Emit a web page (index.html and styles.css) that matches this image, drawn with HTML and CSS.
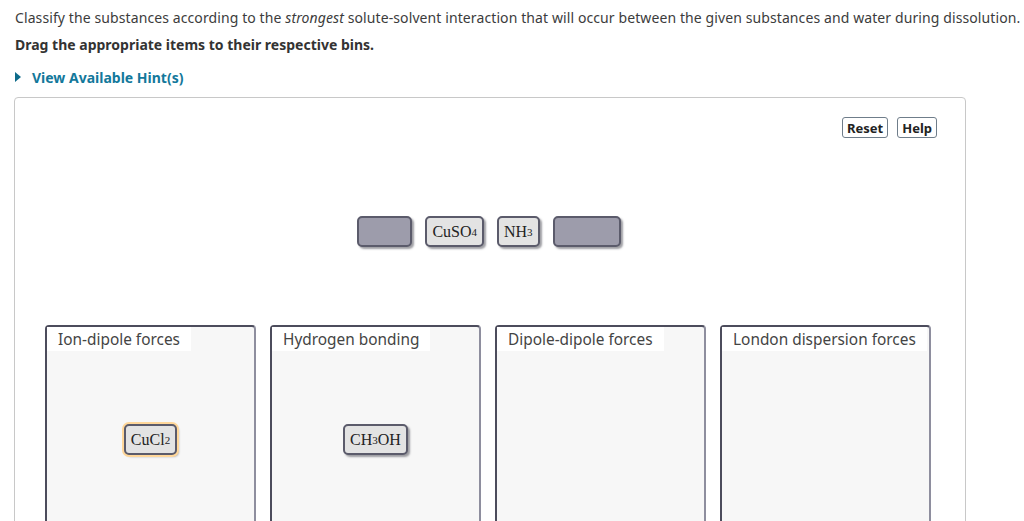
FILE: index.html
```html
<!DOCTYPE html>
<html>
<head>
<meta charset="utf-8">
<link rel="stylesheet" href="styles.css">
</head>
<body>
<p class="prompt">Classify the substances according to the <em>strongest</em> solute-solvent interaction that will occur between the given substances and water during dissolution.</p>
<p class="instr">Drag the appropriate items to their respective bins.</p>
<div class="hint"><span class="tri"></span><span class="hint-text">View Available Hint(s)</span></div>
<div class="board">
  <div class="tools">
    <button class="btn">Reset</button>
    <button class="btn">Help</button>
  </div>
  <div class="pool">
    <div class="token empty wide1"></div>
    <div class="token">CuSO<sub>4</sub></div>
    <div class="token">NH<sub>3</sub></div>
    <div class="token empty wide2"></div>
  </div>
  <div class="bins">
    <div class="bin">
      <div class="bin-label">Ion-dipole forces</div>
      <div class="bin-items"><div class="token selected">CuCl<sub>2</sub></div></div>
    </div>
    <div class="bin">
      <div class="bin-label">Hydrogen bonding</div>
      <div class="bin-items"><div class="token">CH<sub>3</sub>OH</div></div>
    </div>
    <div class="bin">
      <div class="bin-label">Dipole-dipole forces</div>
      <div class="bin-items"></div>
    </div>
    <div class="bin">
      <div class="bin-label">London dispersion forces</div>
      <div class="bin-items"></div>
    </div>
  </div>
</div>
</body>
</html>
```
FILE: styles.css
```css
html { overflow: hidden; }
body {
  margin: 0;
  padding: 8px 0 0 15px;
  font-family: "Noto Sans", "Open Sans", sans-serif;
  color: #333;
  background: #fff;
}
.prompt {
  margin: 0;
  font-size: 14px;
  letter-spacing: 0.1px;
  line-height: 20px;
  color: #3c3c3c;
  white-space: nowrap;
}
.instr {
  margin: 7px 0 0 0;
  font-size: 14px;
  line-height: 20px;
  font-weight: bold;
  color: #333;
}
.hint {
  margin-top: 12px;
  display: flex;
  align-items: center;
  height: 20px;
}
.tri {
  width: 0;
  height: 0;
  border-top: 5.5px solid transparent;
  border-bottom: 5.5px solid transparent;
  border-left: 6px solid #0e6b8a;
  margin-right: 11px;
}
.hint-text {
  font-size: 14px;
  font-weight: bold;
  color: #13789b;
}
.board {
  margin-top: 10px;
  margin-left: -1px;
  width: 950px;
  height: 500px;
  border: 1px solid #c8c8c8;
  border-radius: 4px;
  box-sizing: content-box;
}
.tools {
  display: flex;
  justify-content: flex-end;
  gap: 9px;
  padding: 19px 28px 0 0;
}
.btn {
  font-family: "Noto Sans", "Open Sans", sans-serif;
  font-size: 13px;
  font-weight: bold;
  color: #222;
  background: #fff;
  border: 1px solid #6f7d8a;
  border-radius: 3px;
  height: 21px;
  padding: 0 4px;
  line-height: 18px;
}
.pool {
  display: flex;
  justify-content: center;
  gap: 13px;
  margin-top: 78px;
  padding-right: 2px;
}
.token {
  box-sizing: border-box;
  height: 31px;
  padding: 0 5px;
  border: 2px solid #5b5b6b;
  border-radius: 5px;
  background: #e3e3e3;
  box-shadow: 2px 2px 2px rgba(80, 80, 90, 0.55);
  font-family: "Liberation Serif", "DejaVu Serif", serif;
  font-size: 16px;
  color: #222;
  display: flex;
  align-items: center;
  justify-content: center;
}
.token sub {
  font-size: 11px;
  vertical-align: -4px;
  line-height: 0;
}
.token.empty {
  background: #9d9cab;
}
.wide1 { width: 55px; }
.wide2 { width: 68px; }
.token.selected {
  box-shadow: 0 0 0 2px #ffd79a, 2px 2px 2px rgba(80, 80, 90, 0.4);
}
.bins {
  display: flex;
  gap: 14px;
  margin-top: 78px;
  padding-left: 30px;
}
.bin {
  box-sizing: border-box;
  width: 211px;
  height: 260px;
  border: 2px solid #6c6c7c;
  border-left-color: #4c4c5c;
  border-top-color: #4c4c5c;
  border-right-color: #8e8e9e;
  border-radius: 4px;
  background: #f7f7f7;
}
.bin-label {
  display: inline-block;
  background: #fff;
  color: #444;
  font-size: 15.4px;
  line-height: 23px;
  padding: 1px 11px 0 11px;
  white-space: nowrap;
}
.bin-items {
  display: flex;
  justify-content: center;
  padding-top: 73px;
}
```
